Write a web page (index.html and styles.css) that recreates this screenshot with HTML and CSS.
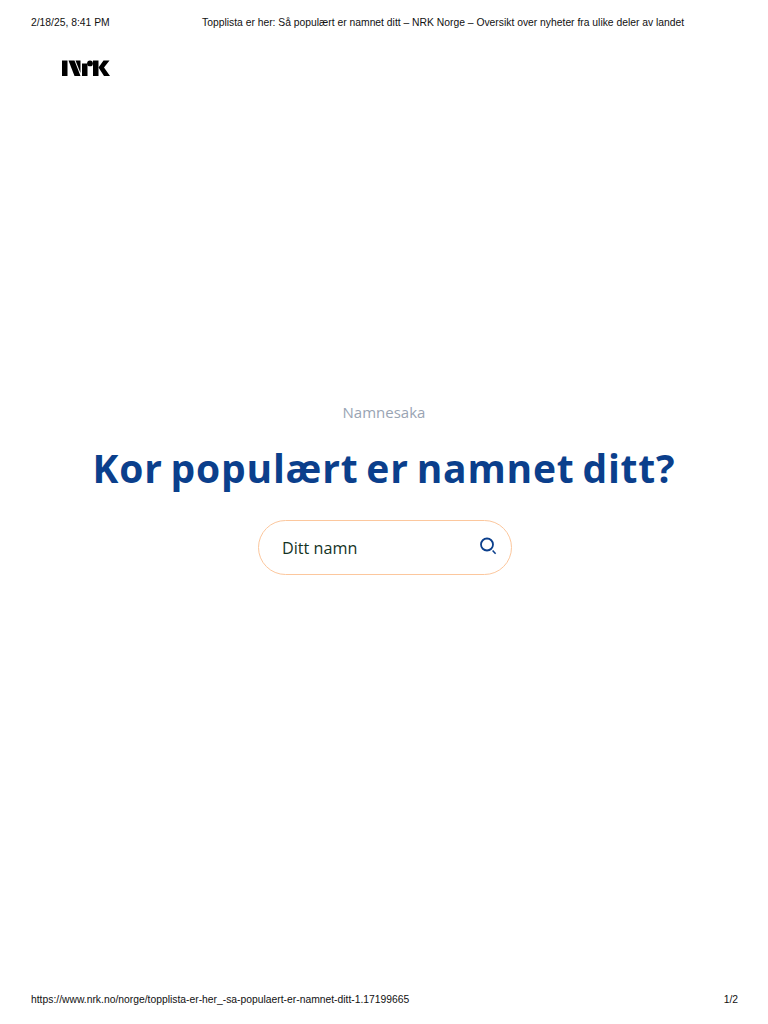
FILE: index.html
```html
<!DOCTYPE html>
<html lang="nn">
<head>
<meta charset="utf-8">
<title>Topplista er her</title>
<link rel="stylesheet" href="styles.css">
</head>
<body>
<div class="page">
  <header class="print-head">
    <span class="date">2/18/25, 8:41 PM</span>
    <span class="doc-title">Topplista er her: Så populært er namnet ditt – NRK Norge – Oversikt over nyheter fra ulike deler av landet</span>
  </header>
  <div class="logo-row">
    <svg class="logo" viewBox="0 0 48 16" width="48" height="16" role="img" aria-label="NRK">
      <path d="M0 0.5H5.5V16H0Z"/>
      <path d="M6.5 0.5H12.5L18.5 16H12.5Z"/>
      <path d="M13.5 0.5H18.5V13Z"/>
      <path d="M20 3.5H25.5V16H20Z"/>
      <circle cx="28" cy="3.4" r="2.9"/>
      <path d="M31 0.5H36.5V16H31Z"/>
      <path d="M36.5 7.5L41.5 0.5H47.5L42 7.5L48 16H42Z"/>
    </svg>
  </div>
  <main class="hero">
    <p class="kicker">Namnesaka</p>
    <h1 class="headline">Kor populært er namnet ditt?</h1>
    <form class="search">
      <span class="search-label">Ditt namn</span>
      <svg class="search-icon" viewBox="0 0 18 18" width="18" height="18" aria-hidden="true">
        <circle cx="8" cy="7.5" r="6" fill="none" stroke="#0b3f8c" stroke-width="1.8"/>
        <path d="M13.6 13.4L16.6 16.8" fill="none" stroke="#0b3f8c" stroke-width="1.5"/>
      </svg>
    </form>
  </main>
  <footer class="print-foot">
    <span>https://www.nrk.no/norge/topplista-er-her_-sa-populaert-er-namnet-ditt-1.17199665</span>
    <span>1/2</span>
  </footer>
</div>
</body>
</html>
```
FILE: styles.css
```css
* { box-sizing: border-box; }
html, body { margin: 0; padding: 0; background: #fff; }
.page {
  width: 768px;
  height: 1024px;
  display: flex;
  flex-direction: column;
  overflow: hidden;
}
.print-head, .print-foot {
  font-family: "Liberation Sans", Arial, sans-serif;
  font-size: 10.33px;
  line-height: 12px;
  color: #111;
}
.print-head {
  padding: 17px 30px 0 31px;
  position: relative;
  height: 29px;
}
.doc-title {
  position: absolute;
  left: 202px;
  top: 17px;
  white-space: nowrap;
}
.logo-row {
  padding: 31px 0 0 62px;
  height: 47px;
}
.logo { display: block; fill: #000; }
.hero {
  flex: 1;
  display: flex;
  flex-direction: column;
  align-items: center;
  padding-top: 326px;
}
.kicker {
  margin: 0;
  font-family: "Open Sans", sans-serif;
  font-size: 15px;
  line-height: 20px;
  color: #99a4b3;
}
.headline {
  margin: 20px 0 0;
  font-family: "Open Sans", sans-serif;
  font-weight: 700;
  font-size: 39px;
  line-height: 52px;
  letter-spacing: 0.8px;
  word-spacing: -3px;
  color: #0b3f8c;
  white-space: nowrap;
}
.search {
  margin: 26px 0 0 2px;
  width: 254px;
  height: 55px;
  border: 1.5px solid #fcc79d;
  border-radius: 28px;
  display: flex;
  align-items: center;
  justify-content: space-between;
  padding: 0 14px 0 23px;
}
.search-label {
  font-family: "Open Sans", sans-serif;
  font-size: 16.2px;
  color: #14331f;
}
.search-icon { display: block; margin-top: -3px; }
.print-foot {
  display: flex;
  justify-content: space-between;
  padding: 0 30px 18px 31px;
}
```
